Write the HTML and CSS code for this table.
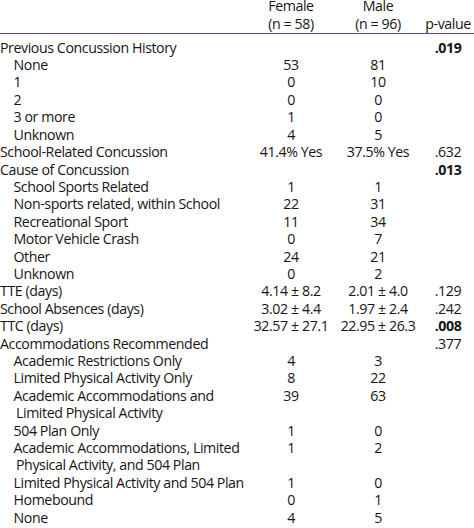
FILE: index.html
```html
<!DOCTYPE html>
<html>
<head>
<meta charset="utf-8">
<link rel="stylesheet" href="styles.css">
</head>
<body>
<table class="tbl">
  <colgroup>
    <col class="c-label">
    <col class="c-f">
    <col class="c-m">
    <col class="c-p">
  </colgroup>
  <thead>
    <tr>
      <th class="lbl"></th>
      <th><span class="h1">Female</span><span class="h2">(n = 58)</span></th>
      <th><span class="h1">Male</span><span class="h2">(n = 96)</span></th>
      <th><span class="h2">p-value</span></th>
    </tr>
  </thead>
  <tbody>
    <tr class="first"><td class="lbl">Previous Concussion History</td><td></td><td></td><td class="b">.019</td></tr>
    <tr><td class="lbl sub">None</td><td>53</td><td>81</td><td></td></tr>
    <tr><td class="lbl sub">1</td><td>0</td><td>10</td><td></td></tr>
    <tr><td class="lbl sub">2</td><td>0</td><td>0</td><td></td></tr>
    <tr><td class="lbl sub">3 or more</td><td>1</td><td>0</td><td></td></tr>
    <tr><td class="lbl sub">Unknown</td><td>4</td><td>5</td><td></td></tr>
    <tr><td class="lbl">School-Related Concussion</td><td>41.4% Yes</td><td>37.5% Yes</td><td>.632</td></tr>
    <tr><td class="lbl">Cause of Concussion</td><td></td><td></td><td class="b">.013</td></tr>
    <tr><td class="lbl sub">School Sports Related</td><td>1</td><td>1</td><td></td></tr>
    <tr><td class="lbl sub">Non-sports related, within School</td><td>22</td><td>31</td><td></td></tr>
    <tr><td class="lbl sub">Recreational Sport</td><td>11</td><td>34</td><td></td></tr>
    <tr><td class="lbl sub">Motor Vehicle Crash</td><td>0</td><td>7</td><td></td></tr>
    <tr><td class="lbl sub">Other</td><td>24</td><td>21</td><td></td></tr>
    <tr><td class="lbl sub">Unknown</td><td>0</td><td>2</td><td></td></tr>
    <tr><td class="lbl">TTE (days)</td><td>4.14 ± 8.2</td><td>2.01 ± 4.0</td><td>.129</td></tr>
    <tr><td class="lbl">School Absences (days)</td><td>3.02 ± 4.4</td><td>1.97 ± 2.4</td><td>.242</td></tr>
    <tr><td class="lbl">TTC (days)</td><td>32.57 ± 27.1</td><td>22.95 ± 26.3</td><td class="b">.008</td></tr>
    <tr><td class="lbl">Accommodations Recommended</td><td></td><td></td><td>.377</td></tr>
    <tr><td class="lbl sub">Academic Restrictions Only</td><td>4</td><td>3</td><td></td></tr>
    <tr><td class="lbl sub">Limited Physical Activity Only</td><td>8</td><td>22</td><td></td></tr>
    <tr><td class="lbl sub wrap">Academic Accommodations and<br>Limited Physical Activity</td><td>39</td><td>63</td><td></td></tr>
    <tr><td class="lbl sub">504 Plan Only</td><td>1</td><td>0</td><td></td></tr>
    <tr><td class="lbl sub wrap">Academic Accommodations, Limited<br>Physical Activity, and 504 Plan</td><td>1</td><td>2</td><td></td></tr>
    <tr><td class="lbl sub">Limited Physical Activity and 504 Plan</td><td>1</td><td>0</td><td></td></tr>
    <tr><td class="lbl sub">Homebound</td><td>0</td><td>1</td><td></td></tr>
    <tr><td class="lbl sub">None</td><td>4</td><td>5</td><td></td></tr>
  </tbody>
</table>
</body>
</html>
```

FILE: styles.css
```css
html, body {
  margin: 0;
  padding: 0;
  background: #ffffff;
}

body {
  font-family: "Open Sans", "Noto Sans", sans-serif;
  font-size: 14.2px;
  letter-spacing: -0.42px;
  color: #161616;
  overflow: hidden;
}

.tbl {
  width: 474px;
  border-collapse: collapse;
  table-layout: fixed;
}

.c-label { width: 248px; }
.c-f { width: 86px; }
.c-m { width: 88px; }
.c-p { width: 52px; }

.tbl th,
.tbl td {
  padding: 0;
  line-height: 17.4px;
  text-align: center;
  vertical-align: top;
  white-space: nowrap;
  font-weight: normal;
}

.tbl thead th {
  vertical-align: bottom;
  padding-bottom: 0.9px;
  border-bottom: 1.5px solid #4b4fa6;
}

.h1 {
  display: block;
  line-height: 12.5px;
  padding-bottom: 2.7px;
}

.h2 {
  display: block;
  line-height: 17.4px;
}

.tbl .lbl {
  text-align: left;
}

.tbl .sub {
  padding-left: 13.5px;
}

.tbl .wrap {
  padding-left: 16px;
  text-indent: -2.5px;
}

.tbl .first td {
  padding-top: 4.2px;
}

.tbl .b {
  font-weight: bold;
}
```
